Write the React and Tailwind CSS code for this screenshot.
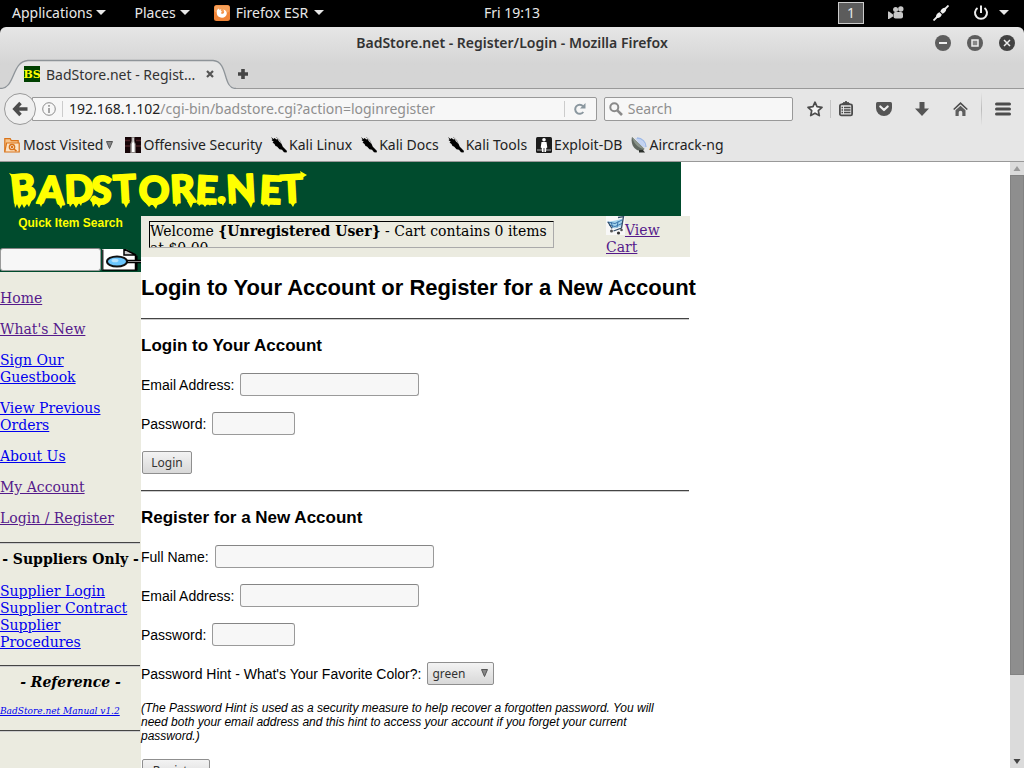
import React from "react";

const Caret = ({ className = "" }) => (
  <svg className={"h-[5px] w-[10px] " + className} viewBox="0 0 10 5" fill="currentColor" aria-hidden="true">
    <path d="M0 0h10L5 5z" />
  </svg>
);

const FirefoxIcon = () => (
  <svg className="size-4" viewBox="0 0 16 16" aria-hidden="true">
    <rect width="16" height="16" rx="2.5" fill="#f08437" />
    <rect x=".5" y=".5" width="15" height="7" rx="2" fill="#f6a05a" />
    <path d="M3 5.2 4.4 3.6l.9 1.2 2-.6-.6 1.6 1.2.7-.9 1.4c.6 1.2 2.4 1.1 3-.1.5-1.2.1-2.3-.8-3.2 2.3.4 3.700 2 3.600 4.100-.2 2.300-2.100 4-4.800 4C5 12.700 3 11 2.800 8.600 2.700 7.300 2.900 6.100 3 5.200z" fill="#fff" />
  </svg>
);

const CameraIcon = () => (
  <svg className="h-[14px] w-[16px]" viewBox="0 0 16 14" fill="#c8c8c8" aria-hidden="true">
    <circle cx="7.6" cy="3.5" r="2.5" />
    <circle cx="12.8" cy="3" r="2.7" />
    <rect x="5.5" y="6" width="9.5" height="6.5" rx="2" />
    <path d="M0 5.5h1l4 3v2l-4 2.5H0z" />
  </svg>
);

const PlugIcon = () => (
  <svg className="size-4" viewBox="0 0 16 16" fill="#eee" stroke="#eee" aria-hidden="true">
    <path d="M.5 15.500 5 11M11 5l4.500-4.500" strokeWidth="1.8" fill="none" />
    <path d="M3 11.500c0-2 2-4 3.600-4.300l2.200 2.200C8.500 11 6.500 13 4.500 13z" stroke="none" />
    <path d="M7.300 6.500 9.500 8.700C11.500 8 13.500 6 13.200 4L12 2.800C10 2.800 8 4.500 7.300 6.500z" stroke="none" />
  </svg>
);

const PowerIcon = () => (
  <svg className="size-4" viewBox="0 0 16 16" fill="none" stroke="#eee" strokeWidth="2" aria-hidden="true">
    <path d="M4.500 3A6 6 0 1 0 11.500 3" />
    <path d="M8 .5V8" />
  </svg>
);

const KaliIcon = () => (
  <svg className="size-4" viewBox="0 0 16 16" fill="#000" aria-hidden="true">
    <path d="M0 0l2.500 2 1-1L5.500 2.500l1-.5L8 4.500l2.500 2.300 1.300 3L16 14l-.5 1.500-2.500-.2-2-2.500-2.500-.6L6 9.500 4.500 9 3.500 7l-2-1.500 1.200-.8L.5 3l1-.6z" />
    <path d="M5 0l4 3.500 1 3" fill="none" stroke="#555" strokeWidth=".5" />
  </svg>
);

const FolderIcon = () => (
  <svg className="size-4" viewBox="0 0 16 16" fill="none" stroke="#d9741b" strokeWidth="1.2" aria-hidden="true">
    <path d="M.8 14.800V1.600h5.400l1 2h7V6" fill="#f8c58c" />
    <path d="M2.600 6h12.600v9H.8z" fill="#fbe3c6" />
    <circle cx="8" cy="10" r="2.6" fill="#fff" strokeWidth="1.5" />
    <circle cx="8" cy="10" r=".6" fill="#d9741b" />
    <path d="M10 12l2.500 2.200" strokeWidth="1.6" />
  </svg>
);

const OffensiveIcon = () => (
  <svg className="size-4" viewBox="0 0 16 16" aria-hidden="true">
    <rect width="16" height="16" fill="#160508" />
    <path d="M0 3.500h5M0 9h5M11 3.500h5M11 9h5" stroke="#4b2226" strokeWidth="1.5" />
    <path d="M6.500 0h3v4l1.200 3v9H5.300V7l1.200-3z" fill="#8d8785" />
    <path d="M7.600 1h1v4l1 2v8H6.800V7l.8-2z" fill="#fff" />
  </svg>
);

const ExploitIcon = () => (
  <svg className="size-4" viewBox="0 0 16 16" aria-hidden="true">
    <rect width="16" height="16" rx="1.5" fill="#1c1c1c" />
    <path d="M1 12h5v2H1zM10 12h5v2h-5z" fill="#666" />
    <circle cx="8" cy="2.8" r="1.8" fill="#fff" />
    <path d="M5.500 5h5l.8 5.500-1 .5-.3 4H6l-.3-4-1-.5z" fill="#fff" />
    <path d="M8 11v4.500" stroke="#1c1c1c" strokeWidth=".8" />
  </svg>
);

const DishIcon = () => (
  <svg className="size-4" viewBox="0 0 16 16" aria-hidden="true">
    <path d="M4 1c6 0 10 4 10.500 10L9 8z" fill="#c3d3f2" />
    <path d="M6 1c5 0 9 4 9 9" fill="none" stroke="#9db9e8" strokeWidth="1.4" />
    <path d="M1 0c-1.500 6 1.500 12.500 7 13.500 2.500.3 4-.2 5.500-1.500z" fill="#5e665f" />
    <path d="M1 0l12.500 12C9 12 3 8 1 0z" fill="#89938a" />
    <path d="M8 13h4l2 2.500H8z" fill="#2c302c" />
  </svg>
);

const CartIcon = () => (
  <svg className="inline size-[19px] align-baseline" viewBox="0 0 19 19" aria-hidden="true">
    <rect width="19" height="19" fill="#f8f8f8" />
    <path d="M1.500 6l8-1.500 7.500-2-1.500 8-7 2z" fill="#a5d4ec" />
    <path d="M1.500 6l7.500 1.500L16 4M3 9l6 1.500 7-3M5 6l2 6M12 5.500l-1 6" fill="none" stroke="#3c78ad" strokeWidth="1" />
    <path d="M12 1.500l5.500-.8-2 11.300-8 3M2 6l4 6.500" fill="none" stroke="#334c66" strokeWidth="1.3" />
    <circle cx="5.500" cy="15" r="1.5" fill="#555" />
    <circle cx="12.500" cy="17" r="1.6" fill="#333" />
    <circle cx="15.500" cy="14" r="1.3" fill="#555" />
  </svg>
);

const BadStoreLogo = () => (
  <svg className="block h-[54px] w-[320px]" viewBox="0 0 320 54" role="img" aria-label="BadStore.net">
    <text
      y="41"
      x="12 37 65 90 114 138 171 195 217 227 259 281"
      rotate="-6 3 -2 4 -3 3 -3 3 0 -3 3 -3"
      fontFamily="Lato, sans-serif"
      fontWeight="900"
      fontSize="38"
      fill="#ffff00"
      stroke="#ffff00"
      strokeWidth="2"
      strokeLinejoin="round"
    >
      BADSTORE.NET
    </text>
    <path
      d="M9 11l8 3-2 6zM14 38l1 8 2-4 2 5 3-5 2 4 3-4 2 3 3-7zM38 38l3 7 3-7zM57 39l4 8 3-8zM68 38l2 7 3-4 3 5 3-5 2 3 2-6zM91 37l2 8 3-4 3 5 3-5 2 2 2-6zM122 38l2 4 2 4 4-8zM144 39l5 6 3-3 4 5 2-5 4-1 2-4zM174 39l2 6 4-6zM187 39l4 7 3-7zM197 38l2 6 3-3 3 4 3-4 2 3 3-6zM220 39l3 5 2-5zM230 39l2 5 3-5zM247 38l4 8 3-8zM261 38l2 6 3-3 3 4 2-4 4 2 1-5zM289 39l4 6 3-6zM300 9l7 4-5 3z"
      fill="#ffff00"
    />
  </svg>
);

const SearchPageIcon = () => (
  <svg className="h-[22px] w-[39px]" viewBox="0 0 39 22" aria-hidden="true">
    <path d="M0 0h24l11 7v14H0z" fill="#fff" />
    <path d="M.8.500v20.700h34V7L23 .5" fill="none" stroke="#000" strokeWidth="1.2" />
    <path d="M22 0v6h12z" fill="#ccc" stroke="#000" strokeWidth="1.5" />
    <path d="M34 7v14" stroke="#000" strokeWidth="2.5" />
    <path d="M24 12.500h15" stroke="#000" strokeWidth="3.5" />
    <path d="M26 12.500h13" stroke="#888" strokeWidth="1" />
    <ellipse cx="15" cy="12.500" rx="10" ry="5" fill="#6bc7ff" stroke="#111" strokeWidth="2" />
    <ellipse cx="13" cy="11.500" rx="3.500" ry="1.8" fill="#b7e4ff" />
  </svg>
);

const input =
  "h-[23px] rounded-[3px] border border-[#9a9a9a] border-t-[#858585] bg-[#f7f7f7] px-1 font-['Noto_Sans',sans-serif] text-[13px] outline-none";
const button =
  "h-[23px] rounded-[2px] border border-[#8f8f8f] bg-linear-to-b from-[#f3f3f3] to-[#d8d8d8] font-['Noto_Sans',sans-serif] text-[12px] leading-[20px] text-[#333]";

const Rule = () => <hr className="mr-px h-[2px] border-0 border-t border-b border-t-[#444] border-b-[#ccc]" />;

const Field = ({ id, label, type = "text", width }) => (
  <div className="flex h-[23px] items-center gap-[6px]">
    <label htmlFor={id}>{label}</label>
    <input id={id} type={type} className={input + " " + width} />
  </div>
);

const Link = ({ visited, children }) => (
  <a href="#" className={"underline " + (visited ? "text-[#551a8b]" : "text-[#0000ee]")}>
    {children}
  </a>
);

const TopBar = () => (
  <header className="grid h-[27px] shrink-0 grid-cols-[1fr_auto_1fr] items-center bg-black pb-[2px] text-[14px] leading-5 text-[#e8e8e8]">
    <nav className="flex items-center pl-3">
      <button className="flex items-center gap-1">Applications<Caret /></button>
      <button className="ml-7 flex items-center gap-1">Places<Caret /></button>
      <button className="ml-6 flex items-center gap-[6px]"><FirefoxIcon />Firefox ESR<Caret /></button>
    </nav>
    <div>Fri 19:13</div>
    <div className="flex items-center justify-end pr-[15px]">
      <button className="h-[22px] w-[26px] border border-[#ccc] bg-[#5c5c5c] leading-5">1</button>
      <button aria-label="Screen recording" className="ml-6"><CameraIcon /></button>
      <button aria-label="Network" className="ml-[29px]"><PlugIcon /></button>
      <button aria-label="System menu" className="ml-6 flex items-center gap-[10px]"><PowerIcon /><Caret /></button>
    </div>
  </header>
);

const WindowChrome = () => (
  <div className="shrink-0 bg-black">
    <div className="rounded-t-md bg-linear-to-b from-[#e6e6e6] to-[#d5d5d5] to-60%">
      <div className="grid h-8 grid-cols-[1fr_auto_1fr] items-center">
        <span />
        <h1 className="text-[14px] leading-5 font-semibold text-[#333]">BadStore.net - Register/Login - Mozilla Firefox</h1>
        <div className="flex justify-end gap-4 pr-[9px]">
          <button aria-label="Minimize">
            <svg className="size-4" viewBox="0 0 16 16"><circle cx="8" cy="8" r="8" fill="#5e5e5e" /><path d="M4 8h8" stroke="#eee" strokeWidth="2" /></svg>
          </button>
          <button aria-label="Maximize">
            <svg className="size-4" viewBox="0 0 16 16"><circle cx="8" cy="8" r="8" fill="#5e5e5e" /><rect x="5" y="5" width="6" height="6" fill="#888" stroke="#eee" strokeWidth="1.5" /></svg>
          </button>
          <button aria-label="Close">
            <svg className="size-4" viewBox="0 0 16 16"><circle cx="8" cy="8" r="8" fill="#424242" /><path d="M5 5l6 6M11 5l-6 6" stroke="#eee" strokeWidth="1.5" /></svg>
          </button>
        </div>
      </div>
      <div className="flex h-[30px]">
        <div className="relative flex w-[236px] items-center pl-6 text-[14px] text-[#333]">
          <svg className="absolute inset-0 h-[30px] w-[236px]" viewBox="0 0 236 30" aria-hidden="true">
            <path d="M0 30v-.5C16 30 11 2.500 28 1.500h185C229 2.500 222 29.500 236 29.500v.5z" fill="#e6e6e6" />
            <path d="M0 29.500C16 29.500 11 2.500 28 1.500h185C229 2.500 222 29.500 236 29.500" fill="none" stroke="#8e9499" strokeWidth="1.3" />
          </svg>
          <span className="relative flex size-4 items-center justify-center bg-[#004000] font-['DejaVu_Serif',serif] text-[11px] leading-none font-bold text-[#ffff00]">BS</span>
          <span className="relative ml-[6px] w-[150px] whitespace-nowrap">BadStore.net - Regist...</span>
          <button aria-label="Close tab" className="relative ml-[10px]">
            <svg className="size-2" viewBox="0 0 8 8"><path d="M1 1l6 6M7 1L1 7" stroke="#555" strokeWidth="2.2" /></svg>
          </button>
        </div>
        <div className="flex flex-1 items-center border-b border-[#999]">
          <button aria-label="New tab" className="pl-[2px]">
            <svg className="size-[10px]" viewBox="0 0 10 10"><path d="M5 0v10M0 5h10" stroke="#444" strokeWidth="3.6" /></svg>
          </button>
        </div>
      </div>
    </div>
  </div>
);

const NavBar = () => (
  <div className="flex h-10 shrink-0 items-center bg-[#e6e6e6] pr-[13px] pl-1 text-[14px] leading-5">
    <button aria-label="Back" className="relative z-10 flex size-8 shrink-0 items-center justify-center rounded-full border border-[#999] bg-[#efefef]">
      <svg className="size-4" viewBox="0 0 16 16" fill="none" stroke="#4c4c4c" strokeWidth="3.5"><path d="M8.500 2 2.800 8l5.700 6M3 8h12.500" /></svg>
    </button>
    <div className="-ml-1 flex h-6 flex-[553] items-center rounded-r-[2px] border border-[#999] bg-[#f7f7f7] pl-[9px]">
      <svg className="size-[14px] shrink-0" viewBox="0 0 14 14" fill="none" stroke="#8a8a8a"><circle cx="7" cy="7" r="6.3" /><path d="M7 6v5M7 3v1.800" strokeWidth="1.5" /></svg>
      <span className="mx-[6px] h-4 w-px shrink-0 bg-[#ccc]" />
      <div className="min-w-0 flex-1 overflow-hidden whitespace-nowrap text-[#8f8f8f]" role="textbox" aria-label="Address">
        <span className="text-[#222]">192.168.1.102</span>/cgi-bin/badstore.cgi?action=loginregister
      </div>
      <button aria-label="Reload" className="flex h-4 w-8 items-center justify-center border-l border-[#ccc]">
        <svg className="size-3" viewBox="0 0 12 12" fill="none" stroke="#8a979f" strokeWidth="2"><path d="M9.300 9A4.500 4.500 0 1 1 9 3.200" /><path d="M11.500 0v5.500H6z" fill="#8a979f" stroke="none" /></svg>
      </button>
    </div>
    <label className="ml-[7px] flex h-6 flex-[183] items-center gap-[5px] rounded-[2px] border border-[#999] bg-[#f7f7f7] pl-1">
      <svg className="size-[14px] shrink-0" viewBox="0 0 14 14" fill="none" stroke="#8a8a8a" strokeWidth="2"><circle cx="5.300" cy="5.300" r="4" /><path d="M8.300 8.300 13 13" strokeWidth="2.6" /></svg>
      <input aria-label="Search" placeholder="Search" className="w-full min-w-0 bg-transparent outline-none placeholder:text-[#8f8f8f]" />
    </label>
    <div className="flex shrink-0 items-center pl-[14px]">
      <button aria-label="Bookmark this page">
        <svg className="size-4" viewBox="0 0 16 16" fill="#f5f5f5" stroke="#4c4c4c" strokeWidth="1.7" strokeLinejoin="round"><path d="M8 1.200l2 4.500 5 .6-3.700 3.300 1 5L8 12.200l-4.300 2.400 1-5L1 6.300l5-.6z" /></svg>
      </button>
      <span className="ml-[7px] h-[18px] w-px bg-[#c4c4c4]" />
      <button aria-label="Bookmarks" className="ml-2">
        <svg className="h-4 w-[14px]" viewBox="0 0 14 16" fill="none" stroke="#4c4c4c"><rect x=".9" y="3.4" width="12.2" height="11" rx="1.5" strokeWidth="1.8" /><path d="M3.500 3l1-1.500h1L7 .3l1.500 1.200h1l1 1.500z" fill="#4c4c4c" /><path d="M2.500 6.500h1.500M5 6.500h6.500M2.500 9h1.500M5 9h6.500M2.500 11.500h1.500M5 11.500h6.500" strokeWidth="1.4" /></svg>
      </button>
      <button aria-label="Pocket" className="ml-[23px]">
        <svg className="h-[14px] w-4" viewBox="0 0 16 14"><path d="M1.500 0h13Q16 0 16 1.500V6a8 8 0 0 1-16 0V1.500Q0 0 1.500 0z" fill="#555" /><path d="M4.300 4.500 8 8l3.700-3.500" fill="none" stroke="#eee" strokeWidth="2.2" strokeLinecap="round" strokeLinejoin="round" /></svg>
      </button>
      <button aria-label="Downloads" className="ml-[23px]">
        <svg className="h-[14px] w-[14px]" viewBox="0 0 14 14" fill="#555"><path d="M4.500 0h5v6.500H14L7 14 0 6.500h4.500z" /></svg>
      </button>
      <button aria-label="Home" className="ml-6">
        <svg className="size-[15px]" viewBox="0 0 15 15"><path d="M.7 7.500 7.500 1.200l6.800 6.300" fill="none" stroke="#4c4c4c" strokeWidth="1.6" /><path d="M2.500 8.300l5-4.600 5 4.600V14H9.300v-3.500a1.800 1.800 0 0 0-3.600 0V14H2.500z" fill="#5e5e5e" /></svg>
      </button>
      <span className="ml-[13px] h-[34px] w-px bg-linear-to-b from-transparent via-[#bbb] to-transparent" />
      <button aria-label="Menu" className="ml-[13px]">
        <svg className="h-[14px] w-4" viewBox="0 0 16 14" stroke="#4c4c4c" strokeWidth="3" strokeLinecap="round"><path d="M1.500 2h13M1.500 7h13M1.500 12h13" /></svg>
      </button>
    </div>
  </div>
);

const bookmarks = [
  ["Offensive Security", OffensiveIcon],
  ["Kali Linux", KaliIcon],
  ["Kali Docs", KaliIcon],
  ["Kali Tools", KaliIcon],
  ["Exploit-DB", ExploitIcon],
  ["Aircrack-ng", DishIcon],
];

const BookmarksBar = () => (
  <nav className="flex h-[33px] shrink-0 items-center gap-[9px] border-b border-[#999] bg-[#e6e6e6] pl-1 text-[14px] leading-5 text-[#222]">
    <button className="mr-[3px] flex items-center gap-[3px] whitespace-nowrap">
      <FolderIcon />Most Visited
      <svg className="h-2 w-[7px]" viewBox="0 0 7 8"><path d="M.5.500h6L3.500 7.500z" fill="#888" stroke="#555" /></svg>
    </button>
    {bookmarks.map(([name, Icon]) => (
      <a key={name} href="#" className="flex items-center gap-[2px] whitespace-nowrap"><Icon />{name}</a>
    ))}
  </nav>
);

const Sidebar = () => (
  <aside className="w-[141px] shrink-0 bg-[#ebebe0] text-[14px] leading-[17px]">
    <form className="h-14 bg-[#004b2d]">
      <label htmlFor="quick" className="block h-8 text-center font-['Liberation_Sans',sans-serif] text-[12px] leading-[14px] font-bold text-[#ffff00]">Quick Item Search</label>
      <div className="flex items-center gap-px">
        <input id="quick" type="text" className={input + " w-[101px]"} />
        <button type="button" aria-label="Search"><SearchPageIcon /></button>
      </div>
    </form>
    <nav className="flex flex-col items-start gap-[14px] pt-[18px] pb-[15px]">
      <Link visited>Home</Link>
      <Link visited>What's New</Link>
      <Link>Sign Our Guestbook</Link>
      <Link>View Previous Orders</Link>
      <Link>About Us</Link>
      <Link visited>My Account</Link>
      <Link visited>Login / Register</Link>
    </nav>
    <Rule />
    <h2 className="pt-[7px] text-center font-bold whitespace-nowrap">- Suppliers Only -</h2>
    <div className="flex flex-col items-start pt-[15px] pb-[14px]">
      <Link>Supplier Login</Link>
      <Link>Supplier Contract</Link>
      <Link>Supplier Procedures</Link>
    </div>
    <Rule />
    <h2 className="pt-[7px] text-center font-bold italic">- Reference -</h2>
    <p className="pt-3 pb-[10px] text-[9px] italic"><Link>BadStore.net Manual v1.2</Link></p>
    <Rule />
  </aside>
);

const Main = () => (
  <main className="w-[549px] shrink-0 bg-white font-['Liberation_Sans',sans-serif] text-[14px] leading-4">
    <div className="flex h-[41px] bg-[#ebebe0] font-['DejaVu_Serif',serif] leading-[17px]">
      <div className="mt-[5px] ml-2 h-[27px] w-[405px] overflow-hidden border border-[#aaa] border-t-black border-l-black pt-px">
        Welcome <b>{"{Unregistered User}"}</b> - Cart contains 0 items at $0.00
      </div>
      <a href="#" className="ml-[52px] w-[60px] text-[#551a8b] underline"><CartIcon />View Cart</a>
    </div>
    <h1 className="pt-[18px] pb-[17px] text-[22px] leading-[26px] font-bold whitespace-nowrap">Login to Your Account or Register for a New Account</h1>
    <Rule />
    <h2 className="pt-4 text-[17px] leading-5 font-bold">Login to Your Account</h2>
    <form className="flex flex-col items-start gap-4 pt-[17px] pb-4">
      <Field id="email" label="Email Address:" width="w-[179px]" />
      <Field id="pw" label="Password:" type="password" width="w-[83px]" />
      <button type="button" className={button + " ml-px w-[50px]"}>Login</button>
    </form>
    <Rule />
    <h2 className="pt-4 text-[17px] leading-5 font-bold">Register for a New Account</h2>
    <form className="flex flex-col items-start gap-4 pt-[17px]">
      <Field id="name" label="Full Name:" width="w-[219px]" />
      <Field id="email2" label="Email Address:" width="w-[179px]" />
      <Field id="pw2" label="Password:" type="password" width="w-[83px]" />
      <div className="flex h-[23px] items-center gap-[6px]">
        <label htmlFor="hint">Password Hint - What's Your Favorite Color?:</label>
        <div className="relative">
          <select id="hint" className={button + " block w-[67px] appearance-none pl-1 text-left"}>
            <option>green</option>
          </select>
          <svg className="pointer-events-none absolute top-[7px] right-[6px] h-2 w-[7px]" viewBox="0 0 7 8"><path d="M.5.500h6L3.500 7.500z" fill="#888" stroke="#555" /></svg>
        </div>
      </div>
      <p className="w-[530px] text-[12px] leading-[14px] italic">
        (The Password Hint is used as a security measure to help recover a forgotten password. You will need both your email address and this hint to access your account if you forget your current password.)
      </p>
      <button type="button" className={button + " ml-px w-[68px]"}>Register</button>
    </form>
  </main>
);

const Scrollbar = () => (
  <div className="flex w-[14px] shrink-0 flex-col items-center bg-[#dbdbdb]" aria-hidden="true">
    <svg className="h-[13px] w-2 shrink-0" viewBox="0 0 8 13"><path d="M4 4l3.500 5h-7z" fill="#999" /></svg>
    <div className="w-full flex-[500] border border-[#828282] bg-[#8e8e8e]" />
    <div className="flex-[80]" />
    <svg className="h-[13px] w-2 shrink-0" viewBox="0 0 8 13"><path d="M4 9 .5 4h7z" fill="#444" /></svg>
  </div>
);

export default function App() {
  return (
    <div className="flex h-screen flex-col overflow-hidden bg-white font-['Noto_Sans',sans-serif]">
      <TopBar />
      <WindowChrome />
      <NavBar />
      <BookmarksBar />
      <div className="flex min-h-0 flex-1">
        <div className="flex min-w-0 flex-1 flex-col overflow-hidden font-['DejaVu_Serif',serif] text-black">
          <div className="w-[681px] shrink-0 bg-[#004b2d]"><BadStoreLogo /></div>
          <div className="flex min-h-0 flex-1">
            <Sidebar />
            <Main />
          </div>
        </div>
        <Scrollbar />
      </div>
    </div>
  );
}
